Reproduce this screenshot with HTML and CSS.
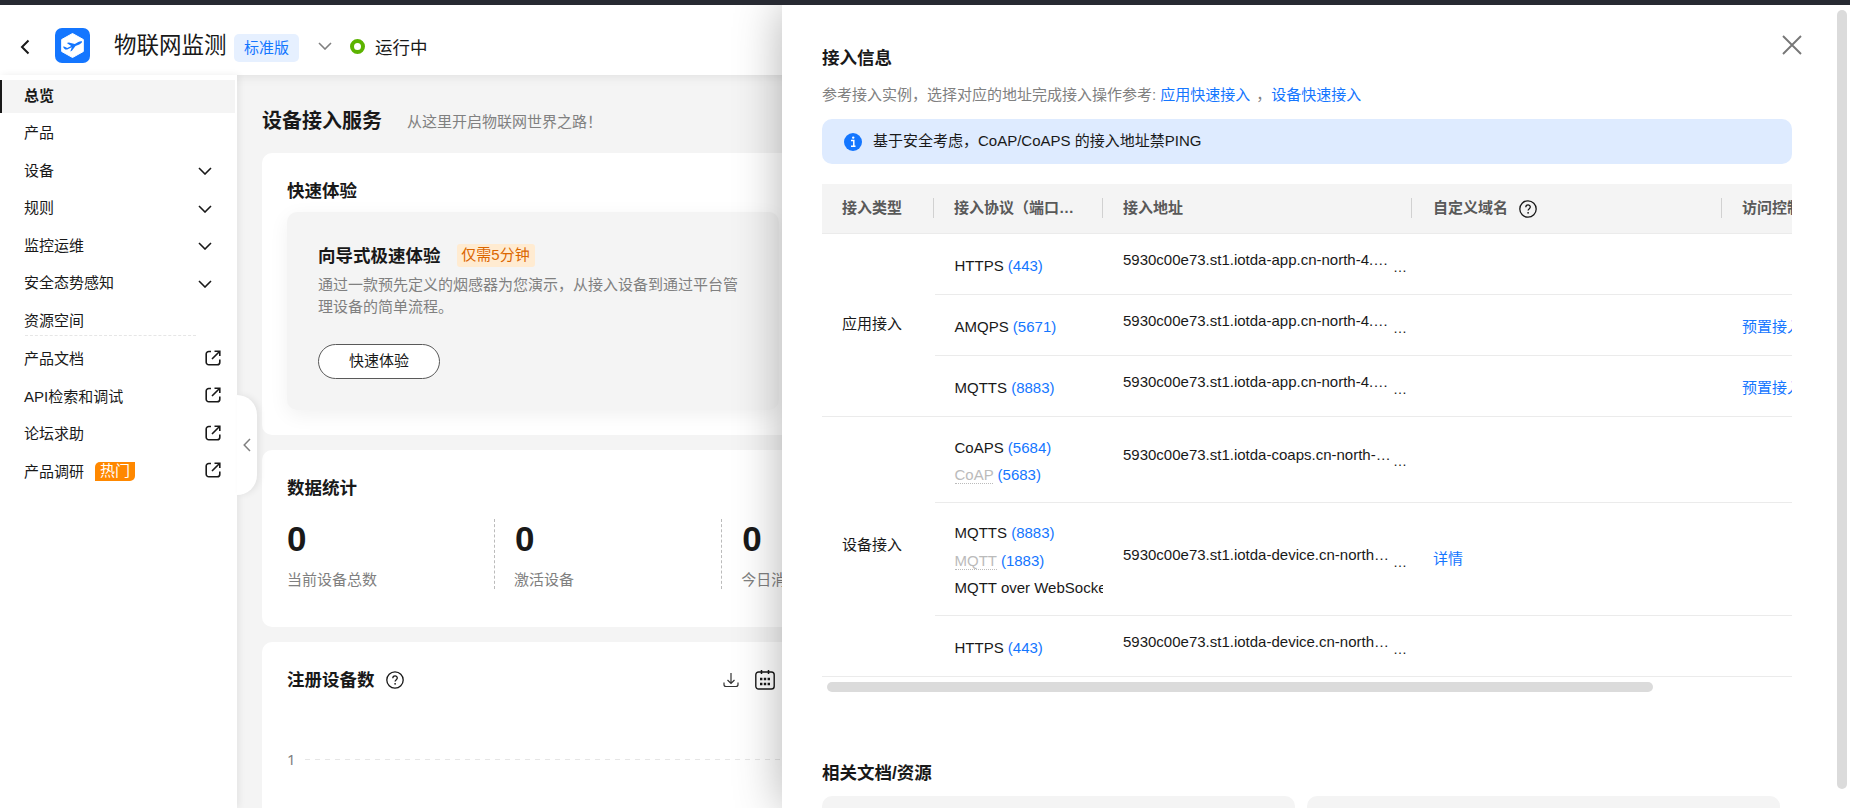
FILE: index.html
```html
<!DOCTYPE html>
<html lang="zh-CN">
<head>
<meta charset="utf-8">
<title>设备接入服务</title>
<link rel="stylesheet" href="styles.css">
</head>
<body>
<svg width="0" height="0" class="defs">
  <symbol id="down" viewBox="0 0 14 8"><path d="M1 1l6 6 6-6" fill="none" stroke="currentColor" stroke-width="1.6"/></symbol>
  <symbol id="ext" viewBox="0 0 16 16"><path d="M6 1.500H3.800A2.600 2.600 0 0 0 1.200 4.100V12.200A2.600 2.600 0 0 0 3.800 14.800H12.200A2.600 2.600 0 0 0 14.800 12.200V9.500M9.500 1.200H14.800V6M14.500 1.500L7 9" fill="none" stroke="currentColor" stroke-width="1.600"/></symbol>
  <symbol id="help" viewBox="0 0 18 18"><circle cx="9" cy="9" r="8.200" fill="none" stroke="currentColor" stroke-width="1.300"/><path d="M6.800 7.300C6.800 4.200 11.300 4.300 11.300 7C11.300 8.600 9.100 8.700 9.100 10.600" fill="none" stroke="currentColor" stroke-width="1.300"/><circle cx="9.100" cy="12.800" r=".9" fill="currentColor"/></symbol>
</svg>
<div class="app">
  <div class="topbar"></div>
  <header class="header">
    <svg class="back" viewBox="0 0 10 16"><path d="M8.500 1.500L2 8l6.500 6.500" fill="none" stroke="#191919" stroke-width="2"/></svg>
    <svg class="logo" viewBox="0 0 35 35"><rect width="35" height="35" rx="7" fill="#1476ff"/><path d="M17.500 5.500L28.300 11.500V23.500L17.500 29.500L6.700 23.500V11.500Z" fill="#fff" stroke="#fff" stroke-linejoin="round"/><path d="M8 18.500l1.800.2 2.400 1.200 4-2-4.400-2.800 2-.6 6 1.500 3.500-2c1.500-.9 3.600-1.200 3.800-.4.200.9-1.300 2-2.800 2.800L20.500 18l-3.600 4.800-1.600.6 1.500-4.200-4.600 2.200c-1.800.6-3-.1-4.200-2.900Z" fill="#1476ff"/></svg>
    <span class="instance">物联网监测</span>
    <span class="edition">标准版</span>
    <svg class="pick"><use href="#down"/></svg>
    <i class="ring"></i>
    <span class="state">运行中</span>
  </header>
  <div class="body">
    <nav class="side">
      <a class="item active">总览</a>
      <a class="item">产品</a>
      <a class="item">设备<svg class="chev"><use href="#down"/></svg></a>
      <a class="item">规则<svg class="chev"><use href="#down"/></svg></a>
      <a class="item">监控运维<svg class="chev"><use href="#down"/></svg></a>
      <a class="item">安全态势感知<svg class="chev"><use href="#down"/></svg></a>
      <a class="item">资源空间</a>
      <div class="split"></div>
      <a class="item">产品文档<svg class="ext"><use href="#ext"/></svg></a>
      <a class="item">API检索和调试<svg class="ext"><use href="#ext"/></svg></a>
      <a class="item">论坛求助<svg class="ext"><use href="#ext"/></svg></a>
      <a class="item">产品调研<b class="hot">热门</b><svg class="ext"><use href="#ext"/></svg></a>
      <div class="fold"><svg viewBox="0 0 8 14"><path d="M7 1L1.200 7 7 13" fill="none" stroke="#808080" stroke-width="1.500"/></svg></div>
    </nav>
    <main class="main">
      <div class="pagehead"><h1>设备接入服务</h1><span>从这里开启物联网世界之路！</span></div>
      <section class="card quick">
        <h2>快速体验</h2>
        <div class="guide">
          <div class="guidehead"><h2>向导式极速体验</h2><span class="tag">仅需5分钟</span></div>
          <p>通过一款预先定义的烟感器为您演示，从接入设备到通过平台管理设备的简单流程。</p>
          <button class="btn">快速体验</button>
        </div>
      </section>
      <section class="card data">
        <h2>数据统计</h2>
        <div class="stats">
          <div class="stat"><b>0</b><span>当前设备总数</span></div>
          <div class="stat"><b>0</b><span>激活设备</span></div>
          <div class="stat"><b>0</b><span>今日消息数</span></div>
        </div>
      </section>
      <section class="card chart">
        <div class="charthead">
          <h2>注册设备数</h2><svg class="help"><use href="#help"/></svg>
          <svg class="dl" viewBox="0 0 16 15"><path d="M8 0V10.500M4.500 7L8 10.500 11.500 7M1 9.500V11.500Q1 13.500 3 13.500H13Q15 13.500 15 11.500V9.500" fill="none" stroke="#333" stroke-width="1.200"/></svg>
          <svg class="cal" viewBox="0 0 20 20"><rect x=".8" y="2" width="18.400" height="17" rx="2.800" fill="none" stroke="#191919" stroke-width="1.400"/><path d="M6.500 0V4M13.500 0V4" stroke="#191919" stroke-width="1.500"/><path d="M5 9h2.400M8.800 9h2.400M12.600 9H15M5 14h2.400M8.800 14h2.400M12.600 14H15" stroke="#191919" stroke-width="2.400"/></svg>
        </div>
        <div class="axis"><span>1</span><svg class="grid"><path d="M0 .5H600" stroke="#e6e6e6" stroke-dasharray="5 5"/></svg></div>
      </section>
    </main>
  </div>
</div>
<aside class="drawer">
  <svg class="close" viewBox="0 0 20 20"><path d="M1 1L19 19M19 1L1 19" stroke="#777" stroke-width="1.900"/></svg>
  <h2>接入信息</h2>
  <p class="intro">参考接入实例，选择对应的地址完成接入操作参考: <a>应用快速接入</a><i>，</i><a>设备快速接入</a></p>
  <div class="alert"><svg viewBox="0 0 18 18"><circle cx="9" cy="9" r="9" fill="#1476ff"/><path d="M7 7.500H9.800V13.300M7 13.300H11.500" fill="none" stroke="#fff" stroke-width="1.500"/><circle cx="9.200" cy="4.600" r="1.200" fill="#fff"/></svg><span>基于安全考虑，CoAP/CoAPS 的接入地址禁PING</span></div>
  <div class="table">
    <div class="thead">
      <div class="c1">接入类型</div><div class="c2">接入协议（端口…</div><div class="c3">接入地址</div><div class="c4">自定义域名<svg class="help"><use href="#help"/></svg></div><div class="c5">访问控制</div>
    </div>
    <div class="group">
      <div class="type">应用接入</div>
      <div class="rows">
        <div class="row"><div class="proto"><div>HTTPS <a>(443)</a></div></div><div class="addr"><span>5930c00e73.st1.iotda-app.cn-north-4.…</span><em>…</em></div></div>
        <div class="row"><div class="proto"><div>AMQPS <a>(5671)</a></div></div><div class="addr"><span>5930c00e73.st1.iotda-app.cn-north-4.…</span><em>…</em></div><div class="dom"></div><div class="acl"><a>预置接入凭证</a></div></div>
        <div class="row"><div class="proto"><div>MQTTS <a>(8883)</a></div></div><div class="addr"><span>5930c00e73.st1.iotda-app.cn-north-4.…</span><em>…</em></div><div class="dom"></div><div class="acl"><a>预置接入凭证</a></div></div>
      </div>
    </div>
    <div class="group">
      <div class="type">设备接入</div>
      <div class="rows">
        <div class="row two"><div class="proto"><div>CoAPS <a>(5684)</a></div><div><u>CoAP</u> <a>(5683)</a></div></div><div class="addr"><span>5930c00e73.st1.iotda-coaps.cn-north-…</span><em>…</em></div></div>
        <div class="row three"><div class="proto"><div>MQTTS <a>(8883)</a></div><div><u>MQTT</u> <a>(1883)</a></div><div>MQTT over WebSocket <a>(443)</a></div></div><div class="addr"><span>5930c00e73.st1.iotda-device.cn-north…</span><em>…</em></div><div class="dom"><a>详情</a></div></div>
        <div class="row"><div class="proto"><div>HTTPS <a>(443)</a></div></div><div class="addr"><span>5930c00e73.st1.iotda-device.cn-north…</span><em>…</em></div></div>
      </div>
    </div>
  </div>
  <div class="hbar"></div>
  <h2 class="docs">相关文档/资源</h2>
  <div class="doclist"><div></div><div></div></div>
  <div class="vbar"></div>
</aside>
</body>
</html>
```

FILE: styles.css
```css
* { box-sizing: border-box; }
body { margin: 0; width: 1850px; height: 808px; overflow: hidden; position: relative; font: 15px/22px "Liberation Sans", "Noto Sans CJK SC", sans-serif; color: #191919; background: #fff; }
.defs { position: absolute; }
svg { display: block; flex: none; }
h1, h2, p { margin: 0; }
h1 { font-size: 20px; line-height: 30px; }
h2 { font-size: 17.5px; line-height: 26px; }
a { color: #1476ff; }
.app { height: 808px; display: flex; flex-direction: column; overflow: hidden; }
.topbar { height: 5px; flex: none; background: #282b33; }
.header { height: 70px; flex: none; display: flex; align-items: center; padding-left: 20px; background: #fff; box-shadow: 0 2px 10px rgba(0,0,0,.08); position: relative; z-index: 1; }
.back { width: 10px; height: 16px; margin-top: 14px; }
.logo { width: 35px; height: 35px; margin: 11px 0 0 25px; }
.instance { margin: 12px 0 0 24px; font-size: 22.5px; line-height: 34px; width: 120px; white-space: nowrap; }
.edition { margin-top: 16px; width: 65px; height: 28px; line-height: 27px; text-align: center; border-radius: 5px; background: #e6f0ff; color: #1476ff; }
.pick { width: 14px; height: 8px; margin: 12px 0 0 19px; color: #808080; }
.ring { width: 15px; height: 15px; margin: 13px 0 0 18px; border: 4px solid #5cb300; border-radius: 50%; }
.state { margin: 15px 0 0 10px; font-size: 17.5px; }
.body { flex: 1; display: flex; min-height: 0; }
.side { width: 237px; flex: none; padding-top: 5px; background: #fff; box-shadow: 2px 0 7px rgba(0,0,0,.07); position: relative; z-index: 2; }
.item { display: flex; align-items: center; height: 33px; margin: 0 2px 4.500px 0; padding: 0 0 2px 24px; color: #191919; }
.active { background: #f4f4f4; font-weight: 700; border-left: 2px solid #191919; padding-left: 22px; }
.chev { width: 14px; height: 8px; margin: 1px 23px 0 auto; }
.ext { width: 16px; height: 16px; margin: -3px 14px 0 auto; }
.split { width: 171px; margin: -7.500px 0 7.500px 25px; border-top: 1px dashed #e6e6e6; }
.hot { margin-left: 11px; width: 40px; height: 19px; border-radius: 5px 0 5px 0; background: #ff8800; color: #fff; font-weight: 400; line-height: 18px; text-align: center; }
.fold { position: absolute; left: 237px; top: 320px; width: 20px; height: 100px; border-radius: 0 20px 20px 0; background: #fff; box-shadow: 3px 0 6px rgba(0,0,0,.07); display: flex; align-items: center; padding-left: 6px; }
.fold svg { width: 8px; height: 14px; }
.main { flex: 1; background: #f4f4f4; padding: 31px 25px 0; display: flex; flex-direction: column; }
.pagehead { display: flex; align-items: center; height: 30px; margin-bottom: 17px; }
.pagehead span { margin: 1px 0 0 25px; color: #808080; }
.card { flex: none; background: #fff; border-radius: 10px; padding: 25px; margin-bottom: 15px; }
.quick { height: 282px; }
.guide { width: 492px; height: 198px; margin-top: 8px; border-radius: 10px; background: #f4f4f4; box-shadow: 0 5px 20px rgba(0,0,0,.06); padding: 31px 30px 0 31px; }
.guidehead { display: flex; align-items: center; }
.guidehead .tag { margin: 0 0 2px 16px; width: 78px; height: 23px; line-height: 22px; border-radius: 3px; background: #ffebd1; color: #db6600; text-align: center; }
.guide p { color: #808080; width: 424px; margin-top: 5px; }
.btn { display: block; margin-top: 26px; width: 122px; height: 35px; border: 1px solid #595959; border-radius: 18px; background: #fff; font: inherit; color: #191919; line-height: 31px; padding: 0 0 2px; }
.data { height: 177px; }
.stats { display: flex; width: 1400px; margin-top: 18px; }
.stat { width: 227.300px; height: 70px; padding-left: 20px; border-left: 1px dashed #bbb; display: flex; flex-direction: column; }
.stat:first-child { width: 207px; padding-left: 0; border: 0; }
.stat b { font-size: 35px; line-height: 40px; margin-bottom: 10px; }
.stat span { color: #808080; margin-left: -1px; }
.stat:first-child span { margin-left: 0; }
.chart { height: 300px; }
.charthead { display: flex; align-items: center; height: 26px; }
.help { width: 18px; height: 18px; margin-left: 11px; }
.dl { width: 16px; height: 15px; margin-left: 319px; }
.cal { width: 20px; height: 20px; margin-left: 16px; }
.axis { display: flex; align-items: center; height: 22px; margin-top: 55px; color: #808080; }
.axis span { width: 18px; font-family: "Noto Sans", sans-serif; }
.grid { width: 600px; height: 1px; }
.drawer { position: absolute; left: 782px; top: 5px; width: 1068px; height: 803px; padding: 40px 58px 0 40px; background: #fff; box-shadow: 0 0 45px rgba(0,0,0,.3); clip-path: inset(0 0 0 -60px); z-index: 5; }
.close { position: absolute; left: 1000px; top: 30px; width: 20px; height: 20px; }
.intro { color: #808080; margin-top: 13px; }
.intro i { font-style: normal; display: inline-block; width: 21px; padding-left: 6px; white-space: nowrap; }
.alert { display: flex; align-items: center; height: 45px; margin-top: 13px; padding: 0 22px; border-radius: 10px; background: #deebff; }
.alert svg { width: 18px; height: 18px; margin-right: 11px; }
.alert span { margin-bottom: 2px; }
.table { margin-top: 20px; overflow: hidden; width: 970px; white-space: nowrap; }
.thead { display: flex; width: 1200px; height: 50px; padding-top: 14px; background: #f4f4f4; border-bottom: 1px solid #ebebeb; color: #595959; font-weight: 700; }
.thead > div { height: 20px; line-height: 20px; border-right: 1px solid #d1d1d1; padding-left: 20px; display: flex; }
.thead .help { color: #191919; margin: 2px 0 0 11px; }
.thead .c1 { width: 112px; }
.thead .c2 { width: 169px; }
.thead .c3 { width: 309px; }
.thead .c4 { width: 310px; padding-left: 21px; }
.thead .c5 { width: 200px; border: 0; }
.group { display: flex; width: 1200px; border-bottom: 1px solid #ebebeb; }
.type { width: 113px; padding: 0 0 3px 20px; display: flex; align-items: center; }
.rows { flex: 1; }
.row { display: flex; align-items: center; height: 61px; border-bottom: 1px solid #ebebeb; }
.row:last-child { border-bottom: 0; height: 60px; }
.row.two { height: 86px; }
.row.three { height: 113px; }
.proto { width: 168px; padding: 3px 0 0 19.500px; line-height: 27.500px; overflow: hidden; }
.proto u { text-decoration: none; color: #bbb; border-bottom: 1px dotted #bbb; }
.addr { width: 309px; padding: 0 0 8px 20px; display: flex; align-items: center; }
.two .addr { padding-bottom: 10px; }
.addr span { width: 270px; }
.addr em { font-style: normal; padding-top: 12px; font-size: 14px; margin-bottom: -1px; }
.dom { width: 310px; padding-left: 21px; }
.acl { padding: 3px 0 0 20px; }
.hbar { width: 826px; height: 10px; margin: 5px 0 0 5px; border-radius: 5px; background: #dbdbdb; }
.docs { margin-top: 68px; }
.doclist { display: flex; gap: 12px; margin-top: 10px; height: 12px; overflow: hidden; }
.doclist div { width: 473px; height: 80px; border-radius: 10px; background: #f4f4f4; }
.vbar { position: absolute; left: 1055px; top: 5px; width: 10px; height: 779px; border-radius: 5px; background: #dbdbdb; }
```
